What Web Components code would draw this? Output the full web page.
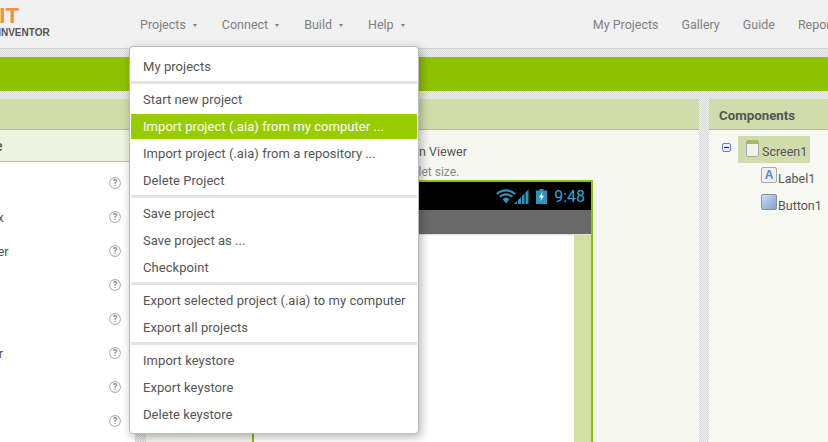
<!DOCTYPE html>
<html>
<head>
<meta charset="utf-8">
<title>App Inventor</title>
<style>
  html, body { margin: 0; height: 442px; overflow: hidden; background: #f1f1f1; }
  body { font-family: Roboto, "Liberation Sans", sans-serif; font-size: 12.5px; color: #555; position: relative; }
  .panels { display: grid; grid-template-columns: 135px 554px 119px; column-gap: 10px; height: 343px; background: repeating-conic-gradient(#d9d9d9 0 25%, #efefef 0 50%) 0 0 / 2px 2px; }
</style>
</head>
<body>
<app-header></app-header>
<dotted-band></dotted-band>
<tool-bar></tool-bar>
<dotted-band short></dotted-band>
<div class="panels">
  <palette-panel></palette-panel>
  <viewer-panel></viewer-panel>
  <components-panel></components-panel>
</div>
<project-menu></project-menu>

<script>
class AppHeader extends HTMLElement {
  constructor() {
    super();
    this.attachShadow({ mode: 'open' });
    const left = ['Projects', 'Connect', 'Build', 'Help'];
    const right = ['My Projects', 'Gallery', 'Guide', 'Report'];
    this.shadowRoot.innerHTML = `
      <style>
        :host { display: flex; height: 48px; background: #f1f1f1; overflow: hidden; white-space: nowrap; color: #808080; }
        .logo { width: 140px; flex: none; display: flex; flex-direction: column; overflow: hidden; }
        .mit { font: bold 22px/22px "Liberation Sans", sans-serif; color: #f88d34; margin: 5px 0 0 -19px; }
        .app { font: bold 10px/12px "Liberation Sans", sans-serif; color: #555; margin: 0 0 0 -25px; }
        nav { display: flex; align-items: center; }
        .menus { gap: 25px; }
        .links { margin-left: auto; gap: 23px; margin-right: -7px; }
        .caret { display: inline-block; margin-left: 7px; vertical-align: 2px; border: 2.5px solid transparent; border-top: 3px solid #808080; border-bottom: 0; }
      </style>
      <div class="logo"><div class="mit">MIT</div><div class="app">APP INVENTOR</div></div>
      <nav class="menus">${left.map(t => `<span>${t}<i class="caret"></i></span>`).join('')}</nav>
      <nav class="links">${right.map(t => `<span>${t}</span>`).join('')}</nav>
    `;
  }
}

class DottedBand extends HTMLElement {
  constructor() {
    super();
    this.attachShadow({ mode: 'open' });
    this.shadowRoot.innerHTML = `
      <style>
        :host { display: block; height: 9px; box-sizing: border-box; border-top: 1px solid #d2d2d2; background: repeating-conic-gradient(#d9d9d9 0 25%, #efefef 0 50%) 0 0 / 2px 2px; }
        :host([short]) { height: 8px; border-top: 0; }
      </style>
    `;
  }
}

class ToolBar extends HTMLElement {
  constructor() {
    super();
    this.attachShadow({ mode: 'open' });
    this.shadowRoot.innerHTML = `<style>:host { display: block; height: 34px; background: #8fc202; }</style>`;
  }
}

class PanelHeader extends HTMLElement {
  constructor() {
    super();
    this.attachShadow({ mode: 'open' });
    this.shadowRoot.innerHTML = `
      <style>
        :host { display: block; height: 31px; box-sizing: border-box; padding-left: 10px; background: #d0dcab; border-bottom: 1px solid #b4b8a4; font-weight: 700; font-size: 13.3px; line-height: 33px; color: #555; }
      </style>
      <slot></slot>
    `;
  }
}

class PaletteRow extends HTMLElement {
  constructor() {
    super();
    this.attachShadow({ mode: 'open' });
    this.shadowRoot.innerHTML = `
      <style>
        :host { display: flex; align-items: center; justify-content: space-between; height: 34px; padding-right: 14px; font-size: 13px; color: #555; }
        svg { display: block; flex: none; }
        text { font: 700 8.5px Roboto, sans-serif; fill: #8c8c8c; }
      </style>
      <slot></slot>
      <svg width="12" height="12" viewBox="0 0 12 12"><circle cx="6" cy="6" r="5.4" fill="#fff" stroke="#b4b4b4" stroke-width="1.1"/><text x="6" y="9" text-anchor="middle">?</text></svg>
    `;
  }
}

class PalettePanel extends HTMLElement {
  constructor() {
    super();
    this.attachShadow({ mode: 'open' });
    const rows = ['Button', 'CheckBox', 'DatePicker', 'Image', 'Label', 'ListPicker', 'ListView', 'Notifier'];
    this.shadowRoot.innerHTML = `
      <style>
        :host { display: block; background: #fff; overflow: hidden; }
        .inner { margin-left: -54px; width: 189px; }
        .group { height: 32px; box-sizing: border-box; margin-left: -40px; background: #eef2e0; border-bottom: 1px solid #b9b9b9; font-size: 14px; line-height: 32px; white-space: nowrap; }
        .group span { margin-left: 8px; font-weight: 500; }
        .rows { padding-top: 4px; }
      </style>
      <panel-header></panel-header>
      <div class="inner">
        <div class="group"><span>User Interface</span></div>
        <div class="rows">${rows.map(r => `<palette-row><span>${r}</span></palette-row>`).join('')}</div>
      </div>
    `;
  }
}

class PhoneFrame extends HTMLElement {
  constructor() {
    super();
    this.attachShadow({ mode: 'open' });
    this.shadowRoot.innerHTML = `
      <style>
        :host { display: block; width: 341px; height: 262px; box-sizing: border-box; border: 2px solid #8fc202; border-bottom: 0; background: #fff; }
        .status { height: 28px; background: #000; display: flex; align-items: center; justify-content: flex-end; padding-right: 6px; color: #33a5d6; font-size: 16px; }
        .status svg { display: block; }
        .time { margin-left: 7px; }
        .title { height: 24px; background: #696969; border-bottom: 1px solid #ddd; }
        .content { display: flex; justify-content: flex-end; height: 208px; }
        .scroll { width: 17px; background: #d3e0a4; }
      </style>
      <div class="status">
        <svg width="20" height="16" viewBox="0 0 20 16">
          <path d="M.8 6 A13.5 13.5 0 0 1 19.2 6" fill="none" stroke="#2f93bb" stroke-width="2.2"/>
          <path d="M3.8 8.8 A9 9 0 0 1 16.2 8.8" fill="none" stroke="#2f93bb" stroke-width="2.2"/>
          <path d="M6.6 11.2 A5 5 0 0 1 13.4 11.2 L10 15.5 Z" fill="#2f93bb"/>
        </svg>
        <svg width="15" height="15" viewBox="0 0 15 15" style="margin-left:-2px">
          <path d="M0 15 L3 12 V15Z M4 15 V11 L7 8 V15Z M8 15 V7 L10.5 4.5 V15Z M11.5 15 V3.5 L14.5 .5 V15Z" fill="#2f93bb"/>
        </svg>
        <svg width="11" height="15" viewBox="0 0 11 15" style="margin-left:7px">
          <path d="M3.5 0 H7.5 V1.5 H11 V15 H0 V1.5 H3.5Z" fill="#2f93bb"/>
          <path d="M6.5 3 L3 8.6 H5.2 L4.2 12.5 L8 6.8 H5.8Z" fill="#fff"/>
        </svg>
        <span class="time">9:48</span>
      </div>
      <div class="title"></div>
      <div class="content"><div class="scroll"></div></div>
    `;
  }
}

class ViewerPanel extends HTMLElement {
  constructor() {
    super();
    this.attachShadow({ mode: 'open' });
    this.shadowRoot.innerHTML = `
      <style>
        :host { display: block; margin-left: 1px; background: #f7f7f1; overflow: hidden; }
        .body { padding: 11px 0 0 106px; white-space: nowrap; }
        .check { height: 21px; line-height: 21px; color: #555; padding-left: 7px; }
        .note { height: 18px; line-height: 21px; color: #8a8a8a; font-size: 12px; padding-left: 14px; }
      </style>
      <panel-header></panel-header>
      <div class="body">
        <div class="check">Display hidden components in Viewer</div>
        <div class="note">Check to see Preview on Tablet size.</div>
        <phone-frame></phone-frame>
      </div>
    `;
  }
}

class TreeNode extends HTMLElement {
  constructor() {
    super();
    this.attachShadow({ mode: 'open' });
    this.shadowRoot.innerHTML = `
      <style>
        :host { display: flex; align-items: center; height: 27px; color: #555; white-space: nowrap; }
        :host([selected]) { background: #d0dcab; }
        ::slotted(svg) { display: block; flex: none; }
      </style>
      <slot name="icon"></slot>
      <slot></slot>
    `;
  }
}

class ComponentsPanel extends HTMLElement {
  constructor() {
    super();
    this.attachShadow({ mode: 'open' });
    this.shadowRoot.innerHTML = `
      <style>
        :host { display: block; background: #f9f9f3; overflow: hidden; }
        .tree { padding-top: 6px; }
        .root { display: flex; align-items: center; padding-left: 13px; }
        .toggle { display: block; flex: none; margin: -4px 7px 0 0; }
        .root tree-node { width: 72px; padding-left: 8px; box-sizing: border-box; }
        .kids { margin-left: 52px; }
        .kids svg { margin-top: -4px; }
        .label { margin-left: 3px; padding-top: 3px; }
        .kids .label { margin-left: 1px; padding-top: 4px; }
        text { font: bold 12px "Liberation Sans", sans-serif; fill: #5b85c0; }
      </style>
      <panel-header>Components</panel-header>
      <div class="tree">
        <div class="root">
          <svg class="toggle" width="9" height="9" viewBox="0 0 9 9"><rect x=".5" y=".5" width="8" height="8" rx="1.5" fill="#eef1fb" stroke="#6a7fc0"/><path d="M2 4.5 H7" stroke="#1c2fb0" stroke-width="1.2"/></svg>
          <tree-node selected>
            <svg slot="icon" width="13" height="17" viewBox="0 0 13 17" style="margin-top:-3px"><rect x=".5" y=".5" width="12" height="16" rx="1.5" fill="#f2f2ec" stroke="#aaa"/><rect x="1" y="1" width="11" height="3" fill="#a5c13c"/></svg>
            <span class="label">Screen1</span>
          </tree-node>
        </div>
        <div class="kids">
          <tree-node>
            <svg slot="icon" width="16" height="16" viewBox="0 0 16 16"><rect x=".5" y=".5" width="15" height="15" rx="1.5" fill="#f0f0f2" stroke="#aaa"/><text x="8" y="12" text-anchor="middle">A</text></svg>
            <span class="label">Label1</span>
          </tree-node>
          <tree-node>
            <svg slot="icon" width="16" height="16" viewBox="0 0 16 16"><defs><linearGradient id="btn" x1="0" y1="0" x2="1" y2="1"><stop offset="0" stop-color="#d6e2f2"/><stop offset=".45" stop-color="#a9c2e4"/><stop offset="1" stop-color="#7f9fd0"/></linearGradient></defs><rect x=".5" y=".5" width="15" height="15" rx="1.5" fill="url(#btn)" stroke="#8a8f98"/></svg>
            <span class="label">Button1</span>
          </tree-node>
        </div>
      </div>
    `;
  }
}

class MenuItem extends HTMLElement {
  constructor() {
    super();
    this.attachShadow({ mode: 'open' });
    this.shadowRoot.innerHTML = `
      <style>
        :host { display: block; flex: none; height: 25px; margin: 1px 0; padding-left: 12px; line-height: 25px; font-size: 13px; letter-spacing: .05px; color: #555; white-space: nowrap; }
        :host([active]) { background: #9c0; color: #fff; }
      </style>
      <slot></slot>
    `;
  }
}

class MenuSeparator extends HTMLElement {
  constructor() {
    super();
    this.attachShadow({ mode: 'open' });
    this.shadowRoot.innerHTML = `<style>:host { display: block; flex: none; height: 3px; margin: 1px 0 2px; background: #e4e4e4; }</style>`;
  }
}

class ProjectMenu extends HTMLElement {
  constructor() {
    super();
    this.attachShadow({ mode: 'open' });
    const groups = [
      ['My projects'],
      ['Start new project', '*Import project (.aia) from my computer ...', 'Import project (.aia) from a repository ...', 'Delete Project'],
      ['Save project', 'Save project as ...', 'Checkpoint'],
      ['Export selected project (.aia) to my computer', 'Export all projects'],
      ['Import keystore', 'Export keystore', 'Delete keystore']
    ];
    const item = t => t[0] === '*'
      ? `<menu-item active>${t.slice(1)}</menu-item>`
      : `<menu-item>${t}</menu-item>`;
    this.shadowRoot.innerHTML = `
      <style>
        :host { position: absolute; left: 129px; top: 46px; width: 290px; height: 388px; box-sizing: border-box; display: flex; flex-direction: column; padding: 6px 1px 5px; background: #fff; border: 1px solid #bbb; border-radius: 4px; box-shadow: 2px 3px 10px rgba(0,0,0,.3); }
      </style>
      ${groups.map(g => g.map(item).join('')).join('<menu-separator></menu-separator>')}
    `;
  }
}

customElements.define('dotted-band', DottedBand);
customElements.define('tool-bar', ToolBar);
customElements.define('panel-header', PanelHeader);
customElements.define('palette-row', PaletteRow);
customElements.define('palette-panel', PalettePanel);
customElements.define('phone-frame', PhoneFrame);
customElements.define('viewer-panel', ViewerPanel);
customElements.define('tree-node', TreeNode);
customElements.define('components-panel', ComponentsPanel);
customElements.define('menu-item', MenuItem);
customElements.define('menu-separator', MenuSeparator);
customElements.define('project-menu', ProjectMenu);
customElements.define('app-header', AppHeader);
</script>
</body>
</html>
